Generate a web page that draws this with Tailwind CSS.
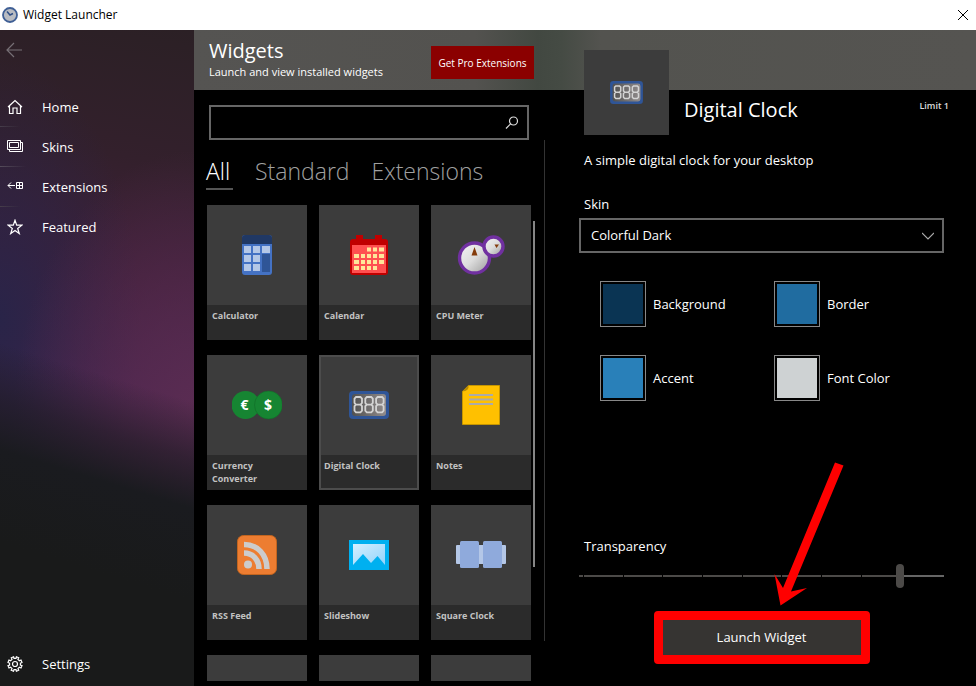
<!DOCTYPE html>
<html lang="en">
<head>
    <meta charset="UTF-8">
    <meta name="viewport" content="width=device-width, initial-scale=1.0">
    <title>Widget Launcher</title>
    <script src="https://cdn.jsdelivr.net/npm/@tailwindcss/browser@4"></script>
</head>
<body class="relative flex h-screen flex-col overflow-hidden bg-black font-['Open_Sans','Noto_Sans',sans-serif] text-[13px] leading-5 text-white">
    <!-- Title bar -->
    <header class="flex h-[30px] shrink-0 items-center justify-between bg-white pl-0.5 pr-[5px] text-black">
        <div class="flex items-center gap-[5px]">
            <svg class="size-4" viewBox="0 0 16 16" fill="none">
                <circle cx="8" cy="8" r="7" fill="#b9bcc2" stroke="#3f5f95" stroke-width="1.8"/>
                <path d="M5 4.5 8 8l3-1.5" stroke="#2f4f86" stroke-width="1.5"/>
            </svg>
            <h1 class="text-[12px]">Widget Launcher</h1>
        </div>
        <button class="p-0.5" aria-label="Close">
            <svg class="size-3" viewBox="0 0 12 12" fill="none" stroke="#000"><path d="m1 1 10 10M11 1 1 11"/></svg>
        </button>
    </header>

    <div class="flex min-h-0 flex-1">
        <!-- Sidebar -->
        <aside class="flex w-[194px] shrink-0 flex-col bg-[linear-gradient(197deg,transparent_52%,#1d1b22a0_60%,#1a1b1f_67%,#191a1a_80%),radial-gradient(ellipse_180px_260px_at_100%_58%,#5a2c52_0%,transparent_100%),radial-gradient(ellipse_140px_260px_at_0%_44%,#292448_0%,transparent_100%),linear-gradient(190deg,#2b2025_0%,#33202c_20%,#40203a_38%,#48244f_56%)]">
            <button class="mt-2 flex h-6 items-center pl-1.5" aria-label="Back">
                <svg class="h-4 w-4" viewBox="0 0 16 16" fill="none" stroke="#777076" stroke-width="1.2"><path d="M16 8H1M8 1 1 8l7 7"/></svg>
            </button>
            <nav class="mt-[25px] flex flex-1 flex-col pb-0.5">
                <a href="#" class="flex h-10 items-center gap-[19px] bg-[linear-gradient(90deg,#463e4a,transparent)] bg-[length:20px_1px] bg-bottom-left bg-no-repeat pl-[7px]">
                    <svg class="size-4" viewBox="0 0 16 16" fill="none" stroke="#fff" stroke-width="1.2"><path d="M1 8 8 1.5 15 8M2.5 7v7.5H6V9h4v5.5h3.5V7"/></svg>
                    Home
                </a>
                <a href="#" class="flex h-10 items-center gap-[19px] bg-[linear-gradient(90deg,#554c5a,transparent)] bg-[length:26px_1px] bg-bottom-left bg-no-repeat pl-[7px]">
                    <svg class="size-4" viewBox="0 0 16 16" fill="none" stroke="#fff"><path d="M.5 1.500h13v9H.5zM2.500 3.500h9v5h-9zM13.500 3.500h2v9h-13v-2"/></svg>
                    Skins
                </a>
                <a href="#" class="flex h-10 items-center gap-[19px] bg-[linear-gradient(90deg,#463e4a,transparent)] bg-[length:20px_1px] bg-bottom-left bg-no-repeat pl-[7px]">
                    <svg class="size-4" viewBox="0 0 16 16" fill="none" stroke="#fff"><path d="M8 6.500H1M4 3.500l-3 3 3 3M9.500 3.500h6v6h-6zM12.500 3.500v6M9.500 6.500h6"/></svg>
                    Extensions
                </a>
                <a href="#" class="flex h-10 items-center gap-[19px] pl-[7px]">
                    <svg class="size-4" viewBox="0 0 16 16" fill="none" stroke="#fff" stroke-width="1.2"><path d="m8 1.200 1.700 5h5.200l-4.200 3.200 1.600 5.200L8 11.500l-4.300 3.100 1.600-5.200L1.100 6.200h5.200z"/></svg>
                    Featured
                </a>
                <a href="#" class="mt-auto flex h-10 items-center gap-[19px] pl-[7px]">
                    <svg class="size-4" viewBox="0 0 16 16" fill="none" stroke="#fff" stroke-width="1.2">
                        <path d="M6.600.8 7 2.400h2L9.400.8l2.300 1-.8 1.500 1.500 1.400 1.600-.7 1 2.400-1.600.7v1.900l1.600.6-1 2.400-1.600-.7-1.400 1.400.7 1.500-2.300 1L9 13.600H7l-.5 1.600-2.300-1 .8-1.500-1.400-1.400-1.600.7-1-2.400L2.600 9V7.100L1 6.400 2 4l1.600.7L5 3.300l-.7-1.500z"/>
                        <circle cx="8" cy="8" r="2.500"/>
                    </svg>
                    Settings
                </a>
            </nav>
        </aside>

        <main class="flex min-w-0 flex-1 flex-col">
            <div class="flex h-[60px] shrink-0 items-start bg-[linear-gradient(90deg,#555452_0%,#53524f_36%,#424841_44%,#454b44_47%,#53534f_52%,#555451_100%)] pl-[15px]">
                <div class="w-[222px] pt-[9px]">
                    <h2 class="text-[20px] leading-6">Widgets</h2>
                    <p class="text-[11px] leading-[18px]">Launch and view installed widgets</p>
                </div>
                <button class="mt-4 h-[33px] w-[103px] bg-[#8b0000] text-[10px]">Get Pro Extensions</button>
            </div>

            <div class="flex min-h-0 flex-1">
                <!-- Widget list -->
                <section class="flex w-[350px] shrink-0 flex-col pb-[5px] pt-[15px]">
                    <div class="mx-[15px] flex h-[35px] shrink-0 items-center border-2 border-[#666]">
                        <input type="search" aria-label="Search widgets" class="h-full min-w-0 flex-1 bg-transparent px-2 outline-none">
                        <button class="px-[7px]" aria-label="Search">
                            <svg class="size-4" viewBox="0 0 16 16" fill="none" stroke="#ddd" stroke-width="1.2"><circle cx="9.500" cy="6" r="4"/><path d="M6.600 8.900 2 13.500"/></svg>
                        </button>
                    </div>
                    <div class="flex h-[65px] shrink-0 items-start gap-[22px] pl-3 pt-3.5 text-[23px] font-light leading-[34px] text-[#a0a0a0]">
                        <button class="w-[27px] border-b-2 border-[#555] text-left text-white">All</button>
                        <button>Standard</button>
                        <button>Extensions</button>
                    </div>
                    <div class="flex min-h-0 flex-1 gap-0.5 overflow-hidden pl-[13px]">
                        <div class="grid auto-rows-[135px] grid-cols-[repeat(3,100px)] gap-x-3 gap-y-[15px] text-[9px] font-bold leading-[13px] text-[#c2c2c2]">
                            <button class="flex flex-col bg-[#2b2b2b] text-left">
                                <span class="grid h-[100px] w-full place-items-center bg-[#3c3c3c]">
                                    <svg class="h-10 w-[50px]" viewBox="0 0 50 40">
                                        <rect x="10" width="30" height="40" rx="3" fill="#4472c4"/>
                                        <path d="M10 9V3q0-3 3-3h24q3 0 3 3v6z" fill="#203864"/>
                                        <path d="M12 11h7v7h-7zM21 11h7v7h-7zM30 11h8v7h-8zM12 20h7v7h-7zM21 20h7v7h-7zM12 29h7v7h-7zM21 29h7v7h-7z" fill="#b4c7e7"/>
                                        <path d="M30 19h8v18h-8z" fill="#2f5597"/>
                                    </svg>
                                </span>
                                <span class="py-1 pl-[5px] pr-4">Calculator</span>
                            </button>
                            <button class="flex flex-col bg-[#2b2b2b] text-left">
                                <span class="grid h-[100px] w-full place-items-center bg-[#3c3c3c]">
                                    <svg class="h-10 w-[50px]" viewBox="0 0 50 40">
                                        <path d="M12 0h7v5h-7zM31 0h7v5h-7z" fill="#c00000"/>
                                        <rect x="6" y="4" width="38" height="36" rx="3" fill="#c00000"/>
                                        <path d="M8 10h34v28H8z" fill="#ff5050"/>
                                        <path d="M23 12.500h4v4h-4zM29 12.500h4v4h-4zM35 12.500h5v4h-5zM10 19h5v4h-5zM17 19h4v4h-4zM23 19h4v4h-4zM29 19h4v4h-4zM35 19h5v4h-5zM10 25h5v4h-5zM17 25h4v4h-4zM23 25h4v4h-4zM29 25h4v4h-4zM35 25h5v4h-5zM10 31h5v4h-5zM17 31h4v4h-4zM23 31h4v4h-4zM29 31h4v4h-4z" fill="#ffe699"/>
                                    </svg>
                                </span>
                                <span class="py-1 pl-[5px] pr-4">Calendar</span>
                            </button>
                            <button class="flex flex-col bg-[#2b2b2b] text-left">
                                <span class="grid h-[100px] w-full place-items-center bg-[#3c3c3c]">
                                    <svg class="h-10 w-[50px]" viewBox="0 0 50 40">
                                        <defs><linearGradient id="dial" x2="1" y2="1"><stop stop-color="#f5f5f5"/><stop offset=".5" stop-color="#ddd"/><stop offset="1" stop-color="#999"/></linearGradient></defs>
                                        <circle cx="18.500" cy="23" r="15" fill="url(#dial)" stroke="#7030a0" stroke-width="3.400"/>
                                        <circle cx="37.500" cy="11.500" r="9.500" fill="url(#dial)" stroke="#7030a0" stroke-width="3.400"/>
                                        <path d="m18.500 12 3 8.500h-6zM38.500 9.500h4.500l-2.500 3.500z" fill="#843c0c"/>
                                    </svg>
                                </span>
                                <span class="py-1 pl-[5px] pr-4">CPU Meter</span>
                            </button>

                            <button class="flex flex-col bg-[#2b2b2b] text-left">
                                <span class="grid h-[100px] w-full place-items-center bg-[#3c3c3c]">
                                    <svg class="h-10 w-[50px]" viewBox="0 0 50 40" font-family="Open Sans" font-size="14" font-weight="700" text-anchor="middle">
                                        <circle cx="13.500" cy="20" r="14" fill="#168532"/>
                                        <circle cx="36.500" cy="20" r="14" fill="#168532" stroke="#126c29" stroke-width=".6"/>
                                        <text x="12.500" y="24.500" fill="#fff">€</text>
                                        <text x="36" y="24.500" fill="#fff">$</text>
                                    </svg>
                                </span>
                                <span class="py-1 pl-[5px] pr-4">Currency Converter</span>
                            </button>
                            <button class="flex flex-col bg-[#2b2b2b] text-left outline-2 -outline-offset-2 outline-[#4c4c4c]">
                                <span class="grid h-[100px] w-full place-items-center bg-[#3c3c3c]">
                                    <svg class="h-[28px] w-10" viewBox="0 0 40 28">
                                        <defs><linearGradient id="lcd"><stop stop-color="#505050"/><stop offset="1" stop-color="#918c8c"/></linearGradient></defs>
                                        <rect width="40" height="28" rx="4" fill="#2f5597"/>
                                        <rect x="3" y="3" width="34" height="22" rx="3" fill="url(#lcd)"/>
                                        <g id="digits" fill="none" stroke="#d4d4d4" stroke-width="1.8">
                                            <path d="M7 6h4.500l1.500 1.500V12l-1.500 1.700H7L5.500 12V7.500zM7 13.700h4.500l1.500 1.500v4.500L11.500 21.300H7l-1.500-1.600v-4.500z"/>
                                            <path d="M17.800 6h4.500l1.500 1.500V12l-1.500 1.700h-4.500L16.300 12V7.500zM17.800 13.700h4.500l1.500 1.500v4.500l-1.500 1.600h-4.500l-1.500-1.600v-4.500z"/>
                                            <path d="M28.600 6h4.500l1.500 1.500V12l-1.500 1.700h-4.500L27.100 12V7.500zM28.600 13.700h4.500l1.500 1.500v4.500l-1.500 1.600h-4.500l-1.500-1.600v-4.500z"/>
                                        </g>
                                    </svg>
                                </span>
                                <span class="py-1 pl-[5px] pr-4">Digital Clock</span>
                            </button>
                            <button class="flex flex-col bg-[#2b2b2b] text-left">
                                <span class="grid h-[100px] w-full place-items-center bg-[#3c3c3c]">
                                    <svg class="h-10 w-[50px]" viewBox="0 0 50 40">
                                        <path d="M12.500.5h31v39h-37v-33z" fill="#ffc000" stroke="#c59500"/>
                                        <path d="M6 6.500 12.500 0q1 6-6.500 6.500z" fill="#b78b04"/>
                                        <path d="M13 10h24M13 14.500h24M13 19h24" stroke="#aaa" stroke-width="2"/>
                                    </svg>
                                </span>
                                <span class="py-1 pl-[5px] pr-4">Notes</span>
                            </button>

                            <button class="flex flex-col bg-[#2b2b2b] text-left">
                                <span class="grid h-[100px] w-full place-items-center bg-[#3c3c3c]">
                                    <svg class="size-10" viewBox="0 0 40 40" fill="none">
                                        <rect x=".5" y=".5" width="39" height="39" rx="6" fill="#ed7d31" stroke="#c2651f"/>
                                        <circle cx="11" cy="29.500" r="4" fill="#ccc"/>
                                        <path d="M7 18c9 0 15 7 15 16M7 9.500C21 9.500 30 20 30 34" stroke="#ccc" stroke-width="5.500"/>
                                    </svg>
                                </span>
                                <span class="py-1 pl-[5px] pr-4">RSS Feed</span>
                            </button>
                            <button class="flex flex-col bg-[#2b2b2b] text-left">
                                <span class="grid h-[100px] w-full place-items-center bg-[#3c3c3c]">
                                    <svg class="h-[30px] w-10" viewBox="0 0 40 30">
                                        <defs><linearGradient id="sky" x2="1" y2="1"><stop stop-color="#d6efff"/><stop offset="1" stop-color="#8fd3fb"/></linearGradient></defs>
                                        <path d="M0 0h40v30H0z" fill="#00b0f0"/>
                                        <path d="M4 4h32v22H4z" fill="url(#sky)"/>
                                        <path d="M4 25 14 14l8 9 6.500-7L36 25v2H4z" fill="#00b0f0"/>
                                    </svg>
                                </span>
                                <span class="py-1 pl-[5px] pr-4">Slideshow</span>
                            </button>
                            <button class="flex flex-col bg-[#2b2b2b] text-left">
                                <span class="grid h-[100px] w-full place-items-center bg-[#3c3c3c]">
                                    <svg class="h-10 w-[50px]" viewBox="0 0 50 40">
                                        <rect y="10" width="50" height="19" rx="1" fill="#b4c7e7"/>
                                        <rect x="4" y="6" width="19" height="27" rx="1.500" fill="#8faadc"/>
                                        <rect x="27" y="6" width="19" height="27" rx="1.500" fill="#8faadc"/>
                                    </svg>
                                </span>
                                <span class="py-1 pl-[5px] pr-4">Square Clock</span>
                            </button>

                            <div class="bg-[#3c3c3c]"></div>
                            <div class="bg-[#3c3c3c]"></div>
                            <div class="bg-[#3c3c3c]"></div>
                        </div>
                        <div class="mt-4 h-[346px] w-0.5 bg-[#858585]"></div>
                    </div>
                </section>

                <div class="mb-[45px] mt-[50px] w-px shrink-0 bg-[#333]"></div>

                <!-- Widget details -->
                <section class="-mt-10 min-w-0 flex-1 pl-[34px] pr-[27px]">
                    <div class="flex pl-[5px]">
                        <div class="grid size-[85px] shrink-0 place-items-center bg-[#3c3c3c]">
                            <svg class="h-[23px] w-[33px]" viewBox="0 0 40 28">
                                <rect width="40" height="28" rx="4" fill="#2f5597"/>
                                <rect x="3" y="3" width="34" height="22" rx="3" fill="url(#lcd)"/>
                                <use href="#digits"/>
                            </svg>
                        </div>
                        <h2 class="flex-1 pl-[15px] pt-[46px] text-[20px] leading-7">Digital Clock</h2>
                        <p class="pt-[46px] text-[9px] font-semibold leading-5 text-[#ddd]">Limit 1</p>
                    </div>
                    <div class="pr-[5px]">
                        <p class="mt-[15px] pl-[5px]">A simple digital clock for your desktop</p>
                        <label for="skin" class="mt-6 block pl-[5px]">Skin</label>
                        <div class="relative mt-1">
                            <select id="skin" class="h-[35px] w-full appearance-none border-2 border-[#666] bg-black px-2.5 pb-0.5">
                                <option>Colorful Dark</option>
                            </select>
                            <svg class="pointer-events-none absolute right-2.5 top-3 h-3 w-3" viewBox="0 0 12 12" fill="none" stroke="#aaa" stroke-width="1.2"><path d="m0 3 6 6 6-6"/></svg>
                        </div>
                        <div class="mt-7 grid grid-cols-[repeat(2,174px)] gap-y-7 pl-[21px]">
                            <label class="flex items-center gap-[7px]">
                                <input type="color" value="#0a3453" class="size-[46px] border border-[#888] bg-black p-0.5 [&::-webkit-color-swatch-wrapper]:p-0 [&::-webkit-color-swatch]:border-0">
                                Background
                            </label>
                            <label class="flex items-center gap-[7px]">
                                <input type="color" value="#206ca0" class="size-[46px] border border-[#888] bg-black p-0.5 [&::-webkit-color-swatch-wrapper]:p-0 [&::-webkit-color-swatch]:border-0">
                                Border
                            </label>
                            <label class="flex items-center gap-[7px]">
                                <input type="color" value="#2980b9" class="size-[46px] border border-[#888] bg-black p-0.5 [&::-webkit-color-swatch-wrapper]:p-0 [&::-webkit-color-swatch]:border-0">
                                Accent
                            </label>
                            <label class="flex items-center gap-[7px]">
                                <input type="color" value="#ced2d3" class="size-[46px] border border-[#888] bg-black p-0.5 [&::-webkit-color-swatch-wrapper]:p-0 [&::-webkit-color-swatch]:border-0">
                                Font Color
                            </label>
                        </div>
                        <label for="transparency" class="mt-[135px] block pl-[5px]">Transparency</label>
                        <input id="transparency" type="range" min="1" max="10" value="9" class="mt-2 block h-6 w-full appearance-none bg-[repeating-linear-gradient(90deg,#000_0_1px,transparent_1px_calc(100%/9)),linear-gradient(90deg,#4c4a48_88%,#666_88%)] bg-[length:calc(100%_-_8px)_2px,100%_2px] bg-center bg-no-repeat [&::-webkit-slider-thumb]:h-6 [&::-webkit-slider-thumb]:w-2 [&::-webkit-slider-thumb]:appearance-none [&::-webkit-slider-thumb]:rounded-full [&::-webkit-slider-thumb]:bg-[#4c4a48]">
                        <div class="mt-[23px] flex justify-center">
                            <button class="h-[53px] w-[216px] rounded-[4px] border-[9px] border-[#f00] bg-[#363432] pb-0.5">Launch Widget</button>
                        </div>
                    </div>
                </section>
            </div>
        </main>
    </div>

    <!-- Arrow pointing at the launch button -->
    <svg class="pointer-events-none absolute bottom-[80px] right-[130px] h-[146px] w-[74px]" viewBox="0 0 74 146" fill="#f00"><path d="M63 2.500 71.500 5.500 19 131.500 35 128 8.500 145.500 2.500 114 11 128z"/></svg>
</body>
</html>
